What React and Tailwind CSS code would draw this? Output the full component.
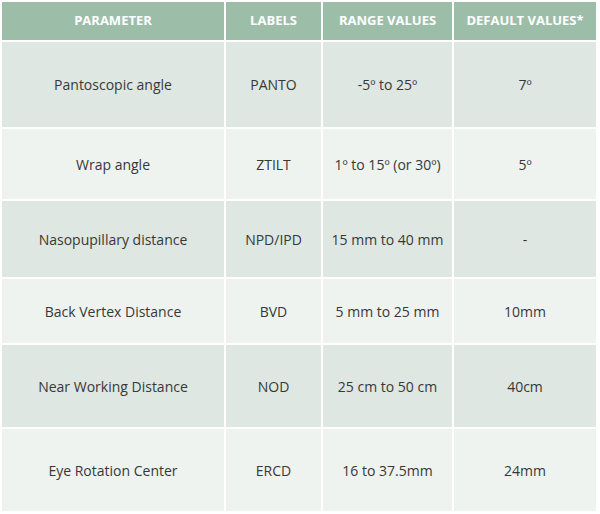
import React from "react";

const rows = [
  { param: "Pantoscopic angle", label: "PANTO", range: "-5º to 25º", def: "7º", h: "h-[85px]" },
  { param: "Wrap angle", label: "ZTILT", range: "1º to 15º (or 30º)", def: "5º", h: "h-[70px]" },
  { param: "Nasopupillary distance", label: "NPD/IPD", range: "15 mm to 40 mm", def: "-", h: "h-[76px]" },
  { param: "Back Vertex Distance", label: "BVD", range: "5 mm to 25 mm", def: "10mm", h: "h-[64px]" },
  { param: "Near Working Distance", label: "NOD", range: "25 cm to 50 cm", def: "40cm", h: "h-[82px]" },
  { param: "Eye Rotation Center", label: "ERCD", range: "16 to 37.5mm", def: "24mm", h: "h-[82px]" },
];

export default function App() {
  return (
    <div className="w-[600px] h-[514px] bg-white font-['Open_Sans',sans-serif]">
      <table className="border-separate border-spacing-[2px] table-fixed w-[598px] text-[14px] text-[#383838] text-center">
        <thead>
          <tr className="h-[38px] bg-[#9cbea9] text-white text-[13px] font-bold uppercase">
            <th className="w-[222px] p-0">Parameter</th>
            <th className="w-[95px] p-0">Labels</th>
            <th className="w-[129px] p-0">Range Values</th>
            <th className="w-[142px] p-0">Default Values*</th>
          </tr>
        </thead>
        <tbody>
          {rows.map((r, i) => (
            <tr key={r.label} className={`${r.h} ${i % 2 === 0 ? "bg-[#dee7e1]" : "bg-[#eef3ef]"}`}>
              <td className="p-0">{r.param}</td>
              <td className="p-0">{r.label}</td>
              <td className="p-0">{r.range}</td>
              <td className="p-0">{r.def}</td>
            </tr>
          ))}
        </tbody>
      </table>
    </div>
  );
}
